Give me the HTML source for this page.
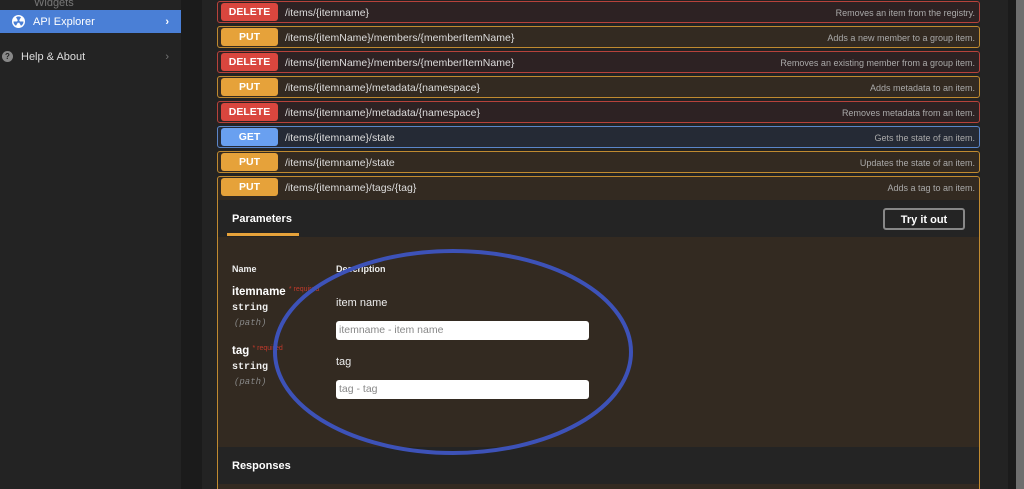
<!DOCTYPE html>
<html style="overflow:hidden;width:1024px;height:489px"><head><style>
*{box-sizing:border-box;margin:0;padding:0}
body{width:1024px;height:489px;overflow:hidden;background:#1b1b1b;font-family:"Liberation Sans",sans-serif;position:relative}
.side{position:absolute;left:0;top:0;width:181px;height:489px;background:#232323}
.nav{position:absolute;left:0;width:181px;height:23px;color:#ddd;font-size:11px;line-height:25px}
.col{position:absolute;left:202px;top:0;width:806px;height:489px;background:#232323}
.sb{position:absolute;left:1016px;top:0;width:8px;height:489px;background:#6e6e6e}
.row{position:absolute;left:217px;width:763px;height:22px;border:1px solid;border-radius:3px;font-size:10px;color:#ddd;overflow:hidden}
.b{position:absolute;left:3px;top:1px;width:57px;height:18px;border-radius:3px;color:#fff;font-weight:bold;font-size:10.5px;text-align:center;line-height:19px}
.p{position:absolute;left:67px;top:1px;line-height:20px;font-size:10.5px}
.d{position:absolute;right:4px;top:1px;line-height:20px;font-size:9px;color:#aaa}
.del{background:#2d2223;border-color:#b7423b}.del .b{background:#d9463e}
.put{background:#332a21;border-color:#c08a30}.put .b{background:#e6a23a}
.get{background:#252a35;border-color:#5b86c9}.get .b{background:#69a0f0}
</style></head><body>
<div class="side">
<div class="nav" style="top:-9px;color:#777;padding-left:34px">Widgets</div>
<div class="nav" style="top:10px;background:#4a7fd6;color:#fff;padding-left:33px">API Explorer<span style="position:absolute;right:12px;font-weight:bold">›</span>
<svg style="position:absolute;left:12px;top:5px" width="13" height="13" viewBox="0 0 13 13"><circle cx="6.5" cy="6.5" r="6.5" fill="#fff"/><circle cx="6.5" cy="6.5" r="1.3" fill="#4a7fd6"/><path d="M6.5 6.5L4 2.2A5 5 0 0 1 9 2.2Z M6.5 6.5L11.5 6.5A5 5 0 0 1 9 10.8Z M6.5 6.5L4 10.8A5 5 0 0 1 1.5 6.5Z" fill="#4a7fd6"/></svg></div>
<div class="nav" style="top:45px;padding-left:21px">Help &amp; About<span style="position:absolute;right:12px;color:#777">›</span>
<span style="position:absolute;left:2px;top:6px;width:11px;height:11px;border-radius:50%;background:#888;color:#222;font-size:8px;line-height:11px;text-align:center;font-weight:bold">?</span></div>
</div>
<div class="col"></div>
<div class="sb"></div>
<div class="row del" style="top:1px"><div class="b">DELETE</div><div class="p">/items/{itemname}</div><div class="d">Removes an item from the registry.</div></div>
<div class="row put" style="top:26px"><div class="b">PUT</div><div class="p">/items/{itemName}/members/{memberItemName}</div><div class="d">Adds a new member to a group item.</div></div>
<div class="row del" style="top:51px"><div class="b">DELETE</div><div class="p">/items/{itemName}/members/{memberItemName}</div><div class="d">Removes an existing member from a group item.</div></div>
<div class="row put" style="top:76px"><div class="b">PUT</div><div class="p">/items/{itemname}/metadata/{namespace}</div><div class="d">Adds metadata to an item.</div></div>
<div class="row del" style="top:101px"><div class="b">DELETE</div><div class="p">/items/{itemname}/metadata/{namespace}</div><div class="d">Removes metadata from an item.</div></div>
<div class="row get" style="top:126px"><div class="b">GET</div><div class="p">/items/{itemname}/state</div><div class="d">Gets the state of an item.</div></div>
<div class="row put" style="top:151px"><div class="b">PUT</div><div class="p">/items/{itemname}/state</div><div class="d">Updates the state of an item.</div></div>
<div class="row put" style="top:176px;height:320px;border-radius:3px 3px 0 0"><div class="b">PUT</div><div class="p">/items/{itemname}/tags/{tag}</div><div class="d">Adds a tag to an item.</div>
<div style="position:absolute;left:0;top:23px;width:761px;height:37px;background:#242424"></div>
<div style="position:absolute;left:14px;top:36px;color:#fff;font-weight:bold;font-size:11px">Parameters</div>
<div style="position:absolute;left:9px;top:56px;width:72px;height:3px;background:#e6a23a"></div>
<div style="position:absolute;left:665px;top:31px;width:82px;height:22px;border:2px solid #888;border-radius:3px;color:#fff;font-weight:bold;font-size:11px;text-align:center;line-height:20px">Try it out</div>
<div style="position:absolute;left:14px;top:87px;font-size:9px;color:#eee;font-weight:bold">Name</div>
<div style="position:absolute;left:118px;top:87px;font-size:9px;color:#eee;font-weight:bold">Description</div>
<div style="position:absolute;left:14px;top:109px;font-size:11.5px;color:#fff;font-weight:bold">itemname <span style="color:#c0392b;font-size:7px;font-weight:normal;vertical-align:4px">* required</span></div>
<div style="position:absolute;left:14px;top:126px;font-size:10px;color:#eee;font-family:'Liberation Mono',monospace;font-weight:bold">string</div>
<div style="position:absolute;left:16px;top:141px;font-size:9px;color:#888;font-style:italic;font-family:'Liberation Mono',monospace">(path)</div>
<div style="position:absolute;left:118px;top:120px;font-size:11px;color:#eee">item name</div>
<div style="position:absolute;left:118px;top:144px;width:253px;height:19px;background:#fff;border-radius:3px;font-size:10.5px;color:#888;line-height:19px;padding-left:3px">itemname - item name</div>
<div style="position:absolute;left:14px;top:168px;font-size:11.5px;color:#fff;font-weight:bold">tag <span style="color:#c0392b;font-size:7px;font-weight:normal;vertical-align:4px">* required</span></div>
<div style="position:absolute;left:14px;top:185px;font-size:10px;color:#eee;font-family:'Liberation Mono',monospace;font-weight:bold">string</div>
<div style="position:absolute;left:16px;top:200px;font-size:9px;color:#888;font-style:italic;font-family:'Liberation Mono',monospace">(path)</div>
<div style="position:absolute;left:118px;top:179px;font-size:11px;color:#eee">tag</div>
<div style="position:absolute;left:118px;top:203px;width:253px;height:19px;background:#fff;border-radius:3px;font-size:10.5px;color:#888;line-height:19px;padding-left:3px">tag - tag</div>
<div style="position:absolute;left:0;top:270px;width:761px;height:37px;background:#242424"></div>
<div style="position:absolute;left:14px;top:283px;color:#fff;font-weight:bold;font-size:11px">Responses</div>
</div>
<svg style="position:absolute;left:0;top:0" width="1024" height="489"><ellipse cx="453" cy="352" rx="178" ry="101" fill="none" stroke="#3d52b8" stroke-width="4"/></svg>
</body></html>
